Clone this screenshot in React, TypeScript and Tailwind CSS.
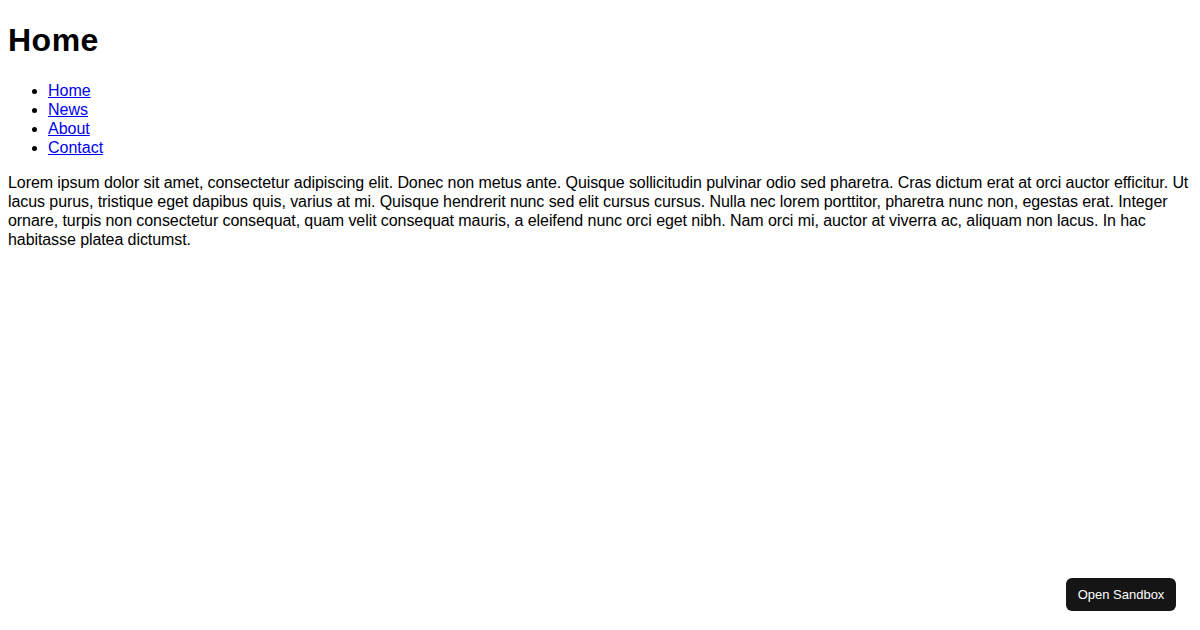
import React from "react";

export default function App() {
  return (
    <div className="bg-white min-h-[630px] px-2 pt-[22.44px] pb-2 text-black font-['Helvetica','Liberation_Sans',Arial,sans-serif] text-base leading-[19px]">
      <h1 className="text-[32px] font-bold leading-[37px] tracking-[0.5px]">Home</h1>
      <ul className="list-disc pl-10 mt-[21.44px] mb-4">
        <li><a href="#" className="text-[#0000ee] underline">Home</a></li>
        <li><a href="#" className="text-[#0000ee] underline">News</a></li>
        <li><a href="#" className="text-[#0000ee] underline">About</a></li>
        <li><a href="#" className="text-[#0000ee] underline">Contact</a></li>
      </ul>
      <p className="my-4 tracking-[-0.08px]">
        Lorem ipsum dolor sit amet, consectetur adipiscing elit. Donec non metus ante. Quisque sollicitudin pulvinar odio sed pharetra. Cras dictum erat at orci auctor efficitur. Ut lacus purus, tristique eget dapibus quis, varius at mi. Quisque hendrerit nunc sed elit cursus cursus. Nulla nec lorem porttitor, pharetra nunc non, egestas erat. Integer ornare, turpis non consectetur consequat, quam velit consequat mauris, a eleifend nunc orci eget nibh. Nam orci mi, auctor at viverra ac, aliquam non lacus. In hac habitasse platea dictumst.
      </p>
      <button className="fixed right-6 bottom-[19px] h-[33px] w-[110px] rounded-md bg-[#151515] text-white text-[13px] font-['Liberation_Sans',Arial,sans-serif] flex items-center justify-center">
        Open Sandbox
      </button>
    </div>
  );
}
